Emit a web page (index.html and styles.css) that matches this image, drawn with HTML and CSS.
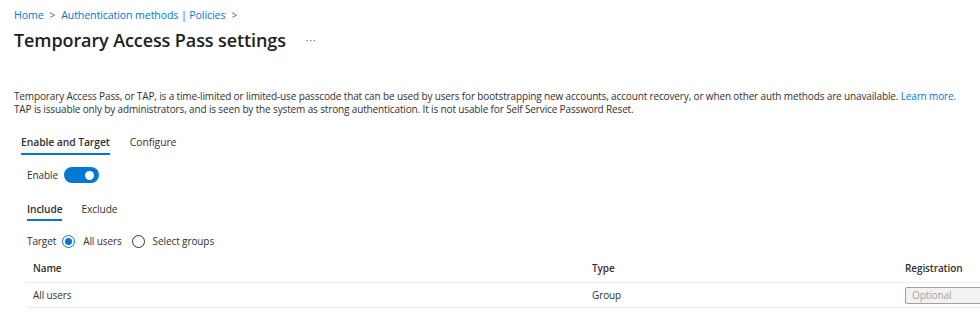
FILE: index.html
```html
<!DOCTYPE html>
<html>
<head>
<meta charset="utf-8">
<link rel="stylesheet" href="styles.css">
</head>
<body>
<div class="page">
  <nav class="crumbs">
    <a class="crumb">Home</a><span class="sep">&gt;</span><a class="crumb">Authentication methods | Policies</a><span class="sep">&gt;</span>
  </nav>
  <div class="titlebar">
    <h1 class="title">Temporary Access Pass settings</h1>
    <span class="more">···</span>
  </div>
  <p class="desc">Temporary Access Pass, or TAP, is a time-limited or limited-use passcode that can be used by users for bootstrapping new accounts, account recovery, or when other auth methods are unavailable. <a class="link">Learn more.</a><br>TAP is issuable only by administrators, and is seen by the system as strong authentication. It is not usable for Self Service Password Reset.</p>

  <div class="tabs main-tabs">
    <span class="tab active">Enable and Target</span>
    <span class="tab">Configure</span>
  </div>

  <div class="inner">
    <div class="enable-row">
      <span class="label">Enable</span>
      <span class="toggle"><span class="knob"></span></span>
    </div>

    <div class="tabs sub-tabs">
      <span class="tab active">Include</span>
      <span class="tab">Exclude</span>
    </div>

    <div class="target-row">
      <span class="label">Target</span>
      <span class="radio checked"></span><span class="rlabel">All users</span>
      <span class="radio"></span><span class="rlabel">Select groups</span>
    </div>
  </div>

  <div class="table">
    <div class="row head">
      <span class="c-name">Name</span>
      <span class="c-type">Type</span>
      <span class="c-reg">Registration</span>
    </div>
    <div class="row body">
      <span class="c-name">All users</span>
      <span class="c-type">Group</span>
      <span class="c-reg"><span class="select">Optional</span></span>
    </div>
  </div>
</div>
</body>
</html>
```

FILE: styles.css
```css
html, body {
  margin: 0;
  padding: 0;
  background: #ffffff;
}
body {
  font-family: "Open Sans", "Noto Sans", sans-serif;
  color: #323130;
  width: 980px;
  height: 328px;
  overflow: hidden;
}
.page {
  padding: 7px 0 0 14px;
}
.crumbs {
  display: flex;
  align-items: center;
  font-size: 10.6px;
  letter-spacing: -0.1px;
  height: 16px;
  line-height: 16px;
}
.crumb {
  color: #0078d4;
}
.sep {
  color: #605e5c;
  margin: 0 6px;
  font-size: 10px;
}
.titlebar {
  display: flex;
  align-items: center;
  margin-top: 5px;
  height: 24px;
}
.title {
  margin: 0;
  font-size: 18px;
  line-height: 24px;
  font-weight: 600;
  color: #201f1e;
  letter-spacing: -0.1px;
}
.more {
  margin-left: 20px;
  color: #605e5c;
  font-size: 10px;
  letter-spacing: 1px;
}
.desc {
  margin: 38px 0 0 0;
  font-size: 10px;
  letter-spacing: -0.14px;
  line-height: 13px;
  color: #323130;
  white-space: nowrap;
}
.link {
  color: #0078d4;
}
.tabs {
  display: flex;
  gap: 20px;
}
.main-tabs {
  margin: 14px 0 0 7px;
  font-size: 10.4px;
  letter-spacing: -0.1px;
}
.tab {
  padding: 5px 0 4px;
  line-height: 14px;
  color: #323130;
  border-bottom: 2px solid transparent;
}
.tab.active {
  font-weight: 600;
  border-bottom-color: #0078d4;
}
.inner {
  padding-left: 13px;
}
.enable-row {
  display: flex;
  align-items: center;
  gap: 6px;
  margin-top: 11px;
  height: 18px;
  font-size: 10px;
  letter-spacing: -0.1px;
}
.toggle {
  width: 35px;
  height: 16px;
  border-radius: 8px;
  background: #0078d4;
  display: flex;
  align-items: center;
  justify-content: flex-end;
  padding-right: 5px;
  box-sizing: border-box;
}
.knob {
  width: 9px;
  height: 9px;
  border-radius: 50%;
  background: #ffffff;
}
.sub-tabs {
  margin-top: 15px;
  font-size: 10.2px;
  letter-spacing: -0.1px;
  gap: 19px;
}
.sub-tabs .tab {
  padding: 3px 0 3px;
}
.target-row {
  display: flex;
  align-items: center;
  margin-top: 11px;
  font-size: 10px;
  letter-spacing: -0.1px;
  height: 18px;
}
.target-row .label {
  margin-right: 6px;
}
.radio {
  width: 13px;
  height: 13px;
  border: 1px solid #323130;
  border-radius: 50%;
  box-sizing: border-box;
  display: flex;
  align-items: center;
  justify-content: center;
  margin-right: 8px;
}
.radio.checked {
  border-color: #0078d4;
}
.radio.checked::after {
  content: "";
  width: 7px;
  height: 7px;
  border-radius: 50%;
  background: #0078d4;
}
.rlabel {
  margin-right: 10px;
}
.table {
  margin: 4px 0 0 12px;
  font-size: 10px;
  letter-spacing: -0.1px;
}
.row {
  display: flex;
  align-items: center;
  border-bottom: 1px solid #edebe9;
  padding-left: 7px;
  overflow: hidden;
}
.row.head {
  height: 28px;
  font-weight: 600;
}
.row.body {
  height: 24px;
}
.c-name {
  width: 559px;
  flex-shrink: 0;
}
.c-type {
  width: 313px;
  flex-shrink: 0;
}
.c-reg {
  flex-shrink: 0;
  display: flex;
}
.select {
  display: block;
  width: 100px;
  height: 17px;
  line-height: 15px;
  box-sizing: border-box;
  border: 1px solid #a19f9d;
  border-radius: 2px;
  background: #f3f2f1;
  color: #a19f9d;
  padding-left: 6px;
  font-size: 10px;
}
```
